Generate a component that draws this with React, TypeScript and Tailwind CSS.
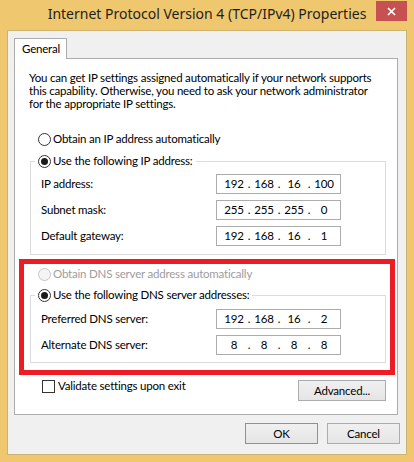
import React from 'react';

const Radio = ({ checked = false, disabled = false }: { checked?: boolean; disabled?: boolean }) => (
  <span
    className={`flex h-[13px] w-[13px] shrink-0 items-center justify-center rounded-full border ${
      disabled ? 'border-[#c4c4c4] bg-[#f4f4f4]' : 'border-[#333333] bg-white'
    }`}
  >
    {checked && <span className="h-[7px] w-[7px] rounded-full bg-[#1a1a1a]" />}
  </span>
);

const RadioRow = ({ label, checked, disabled }: { label: string; checked?: boolean; disabled?: boolean }) => (
  <div className={`flex h-[14px] items-center gap-[2px] ${disabled ? 'text-[#9d9d9d]' : 'text-black'}`}>
    <Radio checked={checked} disabled={disabled} />
    <span className="whitespace-nowrap">{label}</span>
  </div>
);

const IpField = ({ parts }: { parts: string[] }) => (
  <div className="flex h-[20px] w-[125px] items-center border border-[#acacac] bg-white pl-[5px]">
    {parts.map((p, i) => (
      <React.Fragment key={i}>
        {i > 0 && <span className="w-[6px] text-center">.</span>}
        <span className="w-[24px] text-center">{p}</span>
      </React.Fragment>
    ))}
  </div>
);

const FieldRow = ({ label, parts }: { label: string; parts: string[] }) => (
  <div className="flex items-center">
    <span className="w-[175px]">{label}</span>
    <IpField parts={parts} />
  </div>
);

const Button = ({ label, primary, className }: { label: string; primary?: boolean; className?: string }) => (
  <button
    className={`flex h-[21px] items-center justify-center border bg-linear-to-b from-[#f0f0f0] to-[#e5e5e5] text-black ${
      primary ? 'border-[#569de5]' : 'border-[#acacac]'
    } ${className ?? ''}`}
  >
    {label}
  </button>
);

export default function App() {
  return (
    <div className="relative flex h-[462px] w-[414px] flex-col bg-[#efc76f] font-['Lato','Noto_Sans',sans-serif] text-[11.5px] leading-[14px] tracking-[-0.2px] text-black">
      {/* title bar */}
      <div className="flex h-[30px] shrink-0 items-center justify-center pb-[2px]">
        <span className="font-['Noto_Sans',sans-serif] text-[14px] tracking-normal text-[#1e1e1e]">
          Internet Protocol Version 4 (TCP/IPv4) Properties
        </span>
      </div>
      <div className="absolute right-[7px] top-[1px] flex h-[20px] w-[31px] items-center justify-center bg-[#c75050]">
        <svg width="9" height="9" viewBox="0 0 9 9">
          <path d="M1 1 L8 8 M8 1 L1 8" stroke="#ffffff" strokeWidth="1.7" />
        </svg>
      </div>

      {/* client area */}
      <div className="mx-[7px] mb-[7px] flex flex-1 flex-col border border-[#cfb172] bg-[#f0f0f0] pt-[7px]">
        <div className="relative z-10 -mb-px ml-[6px] h-[21px] w-[53px] border-x border-t border-[#acacac] bg-white pl-[7px] pt-[3px]">
          General
        </div>

        <div className="ml-[6px] mr-[8px] flex flex-col border border-[#acacac] bg-white pb-[13px]">
          <p className="ml-[14px] mt-[12px] whitespace-nowrap leading-[13px]">
            You can get IP settings assigned automatically if your network supports
            <br />
            this capability. Otherwise, you need to ask your network administrator
            <br />
            for the appropriate IP settings.
          </p>

          <div className="ml-[23px] mt-[22px]">
            <RadioRow label="Obtain an IP address automatically" />
          </div>

          <fieldset className="ml-[15px] mr-[11px] mt-[8px] border border-[#dcdcdc] pb-[8px]">
            <legend className="ml-[4px] px-[3px]">
              <RadioRow label="Use the following IP address:" checked />
            </legend>
            <div className="flex flex-col gap-[6px] pl-[10px] pt-[6px]">
              <FieldRow label="IP address:" parts={['192', '168', '16', '100']} />
              <FieldRow label="Subnet mask:" parts={['255', '255', '255', '0']} />
              <FieldRow label="Default gateway:" parts={['192', '168', '16', '1']} />
            </div>
          </fieldset>

          <div className="ml-[23px] mt-[12px]">
            <RadioRow label="Obtain DNS server address automatically" disabled />
          </div>

          <fieldset className="ml-[15px] mr-[11px] mt-[7px] border border-[#dcdcdc] pb-[7px]">
            <legend className="ml-[4px] px-[3px]">
              <RadioRow label="Use the following DNS server addresses:" checked />
            </legend>
            <div className="flex flex-col gap-[6px] pl-[10px] pt-[7px]">
              <FieldRow label="Preferred DNS server:" parts={['192', '168', '16', '2']} />
              <FieldRow label="Alternate DNS server:" parts={['8', '8', '8', '8']} />
            </div>
          </fieldset>

          <div className="mt-[16px] flex items-start pl-[27px] pr-[11px]">
            <div className="flex items-center gap-[3px]">
              <span className="h-[13px] w-[13px] border border-[#333333] bg-white" />
              <span>Validate settings upon exit</span>
            </div>
            <Button label="Advanced..." className="ml-auto mt-[1px] w-[88px]" />
          </div>
        </div>

        <div className="mr-[6px] mt-[8px] flex justify-end gap-[9px]">
          <Button label="OK" primary className="w-[73px]" />
          <Button label="Cancel" className="w-[73px]" />
        </div>
      </div>

      {/* highlight annotation */}
      <div className="pointer-events-none absolute left-[19px] top-[259px] h-[116px] w-[376px] border-[5px] border-[#ed1c24]" />
    </div>
  );
}
